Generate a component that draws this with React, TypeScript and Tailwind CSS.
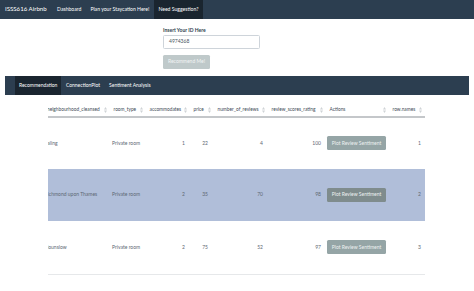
import React from "react";

const Sort = () => (
  <svg width="3" height="6" viewBox="0 0 3 6" className="shrink-0">
    <path d="M1.5 0 L3 2.4 L0 2.4 Z" fill="#cfd3d6" />
    <path d="M1.5 6 L3 3.6 L0 3.6 Z" fill="#cfd3d6" />
  </svg>
);

const headers = [
  "neighbourhood_cleansed",
  "room_type",
  "accommodates",
  "price",
  "number_of_reviews",
  "review_scores_rating",
  "Actions",
  "row.names",
];

const rows = [
  { n: "Ealing", t: "Private room", a: "1", p: "22", r: "4", s: "100", id: "1", sel: false },
  { n: "Richmond upon Thames", t: "Private room", a: "2", p: "35", r: "70", s: "98", id: "2", sel: true },
  { n: "Hounslow", t: "Private room", a: "2", p: "75", r: "52", s: "97", id: "3", sel: false },
];

export default function App() {
  return (
    <div className="w-[474px] h-[291px] overflow-hidden bg-white font-['Lato','Liberation_Sans',sans-serif]">
      {/* navbar */}
      <div className="flex h-[19px] items-stretch bg-[#2c3e50] text-white">
        <div className="flex items-center pl-[5px] pr-[6px] text-[6.1px] leading-none">ISSS616 Airbnb</div>
        <div className="flex items-center px-[4.5px] text-[5.1px] leading-none">Dashboard</div>
        <div className="flex items-center px-[4.5px] text-[5.1px] leading-none">Plan your Staycation Here!</div>
        <div className="flex items-center bg-[#1a252f] px-[4.5px] text-[5.1px] leading-none">Need Suggestion?</div>
      </div>

      {/* form */}
      <div className="ml-[163px] mt-[8px] flex flex-col items-start">
        <div className="text-[5px] font-bold leading-[6px] text-[#2c3e50]">Insert Your ID Here</div>
        <div className="mt-[2px] flex h-[14px] w-[97px] items-center rounded-[1.5px] border border-[#ced4da] bg-white pl-[5px] text-[5px] text-[#4a5560]">
          4974368
        </div>
        <div className="mt-[6px] flex h-[14px] w-[47px] items-center justify-center rounded-[1.5px] bg-[#bfc9ca] text-[5px] text-[#f2f4f4]">
          Recommend Me!
        </div>
      </div>

      {/* tabs */}
      <div className="mx-[5px] mt-[7px] flex h-[19px] items-stretch bg-[#2c3e50] pl-[10px] text-white">
        <div className="flex items-center bg-[#1a252f] px-[4px] text-[5px] leading-none">Recommendation</div>
        <div className="flex items-center px-[4.5px] text-[5px] leading-none">ConnectionPlot</div>
        <div className="flex items-center px-[4.5px] text-[5px] leading-none">Sentiment Analysis</div>
      </div>

      {/* table */}
      <div className="ml-[48px] mt-[9px] w-[377px] overflow-hidden">
        <div className="grid h-[12px] grid-cols-[62px_36px_44px_24px_54px_58px_63px_36px] text-[4.8px] text-[#3e4a56]">
          {headers.map((h, i) => (
            <div key={h} className={`flex items-center justify-between gap-[1px] overflow-hidden whitespace-nowrap ${i === 0 ? "pr-[3px]" : "pl-[3.5px] pr-[3px]"}`}>
              <span className={i === 0 ? "-ml-[1px]" : ""}>{h}</span>
              <Sort />
            </div>
          ))}
        </div>
        {rows.map((r, idx) => (
          <div
            key={r.id}
            className={`grid h-[52.5px] grid-cols-[62px_36px_44px_24px_54px_58px_63px_36px] items-center text-[5px] text-[#5d6873] ${idx === 0 ? "border-t-2 border-[#c4c7ca]" : ""} ${r.sel ? "bg-[#b0bed9]" : "bg-white"}`}
          >
            <div className="overflow-hidden whitespace-nowrap">
              <span className="-ml-[3.5px] inline-block">{r.n}</span>
            </div>
            <div className="whitespace-nowrap pl-[2px]">{r.t}</div>
            <div className="pr-[5px] text-right">{r.a}</div>
            <div className="pr-[6px] text-right">{r.p}</div>
            <div className="pr-[5px] text-right">{r.r}</div>
            <div className="pr-[5px] text-right">{r.s}</div>
            <div className="pl-[1px]">
              <div
                className={`flex h-[14px] w-[59px] items-center justify-center rounded-[1.5px] text-[5px] text-[#eef1f1] ${r.sel ? "bg-[#7f8c8d]" : "bg-[#95a5a6]"}`}
              >
                Plot Review Sentiment
              </div>
            </div>
            <div className="pr-[4px] text-right">{r.id}</div>
          </div>
        ))}
        <div className="h-px bg-[#e6e8ea]" />
      </div>
    </div>
  );
}
